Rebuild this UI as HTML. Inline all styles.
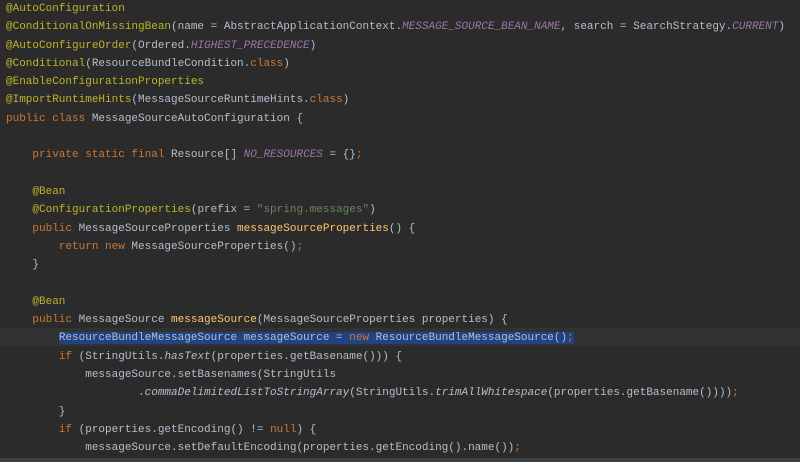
<!DOCTYPE html>
<html><head><style>
body{margin:0;background:#2b2b2b;width:800px;height:462px;overflow:hidden;position:relative}
pre{margin:0;position:absolute;left:6px;top:0px;font-family:"Liberation Mono",monospace;font-size:11px;line-height:18.3px;color:#b3bfcc}
.a{color:#bbb529}.k{color:#cc7832}.p{color:#9876aa;font-style:italic}.i{font-style:italic}.m{color:#ffc66d}.s{color:#6a8759}
.hl{background:#214283}
#cur{position:absolute;left:0;top:328px;width:800px;height:18px;background:#323232}
#bot{position:absolute;left:0;bottom:0;width:800px;height:4px;background:#3c3f41}
</style></head><body>
<div id="cur"></div>
<pre><span class="a">@AutoConfiguration</span>
<span class="a">@ConditionalOnMissingBean</span>(name = AbstractApplicationContext.<span class="p">MESSAGE_SOURCE_BEAN_NAME</span>, search = SearchStrategy.<span class="p">CURRENT</span>)
<span class="a">@AutoConfigureOrder</span>(Ordered.<span class="p">HIGHEST_PRECEDENCE</span>)
<span class="a">@Conditional</span>(ResourceBundleCondition.<span class="k">class</span>)
<span class="a">@EnableConfigurationProperties</span>
<span class="a">@ImportRuntimeHints</span>(MessageSourceRuntimeHints.<span class="k">class</span>)
<span class="k">public class</span> MessageSourceAutoConfiguration {

    <span class="k">private static final</span> Resource[] <span class="p">NO_RESOURCES</span> = {}<span class="k">;</span>

    <span class="a">@Bean</span>
    <span class="a">@ConfigurationProperties</span>(prefix = <span class="s">"spring.messages"</span>)
    <span class="k">public</span> MessageSourceProperties <span class="m">messageSourceProperties</span>() {
        <span class="k">return new</span> MessageSourceProperties()<span class="k">;</span>
    }

    <span class="a">@Bean</span>
    <span class="k">public</span> MessageSource <span class="m">messageSource</span>(MessageSourceProperties properties) {
        <span class="hl">ResourceBundleMessageSource messageSource = <span class="k">new</span> ResourceBundleMessageSource()<span class="k">;</span></span>
        <span class="k">if</span> (StringUtils.<span class="i">hasText</span>(properties.getBasename())) {
            messageSource.setBasenames(StringUtils
                    .<span class="i">commaDelimitedListToStringArray</span>(StringUtils.<span class="i">trimAllWhitespace</span>(properties.getBasename())))<span class="k">;</span>
        }
        <span class="k">if</span> (properties.getEncoding() != <span class="k">null</span>) {
            messageSource.setDefaultEncoding(properties.getEncoding().name())<span class="k">;</span>
</pre>
<div id="bot"></div>
</body></html>
